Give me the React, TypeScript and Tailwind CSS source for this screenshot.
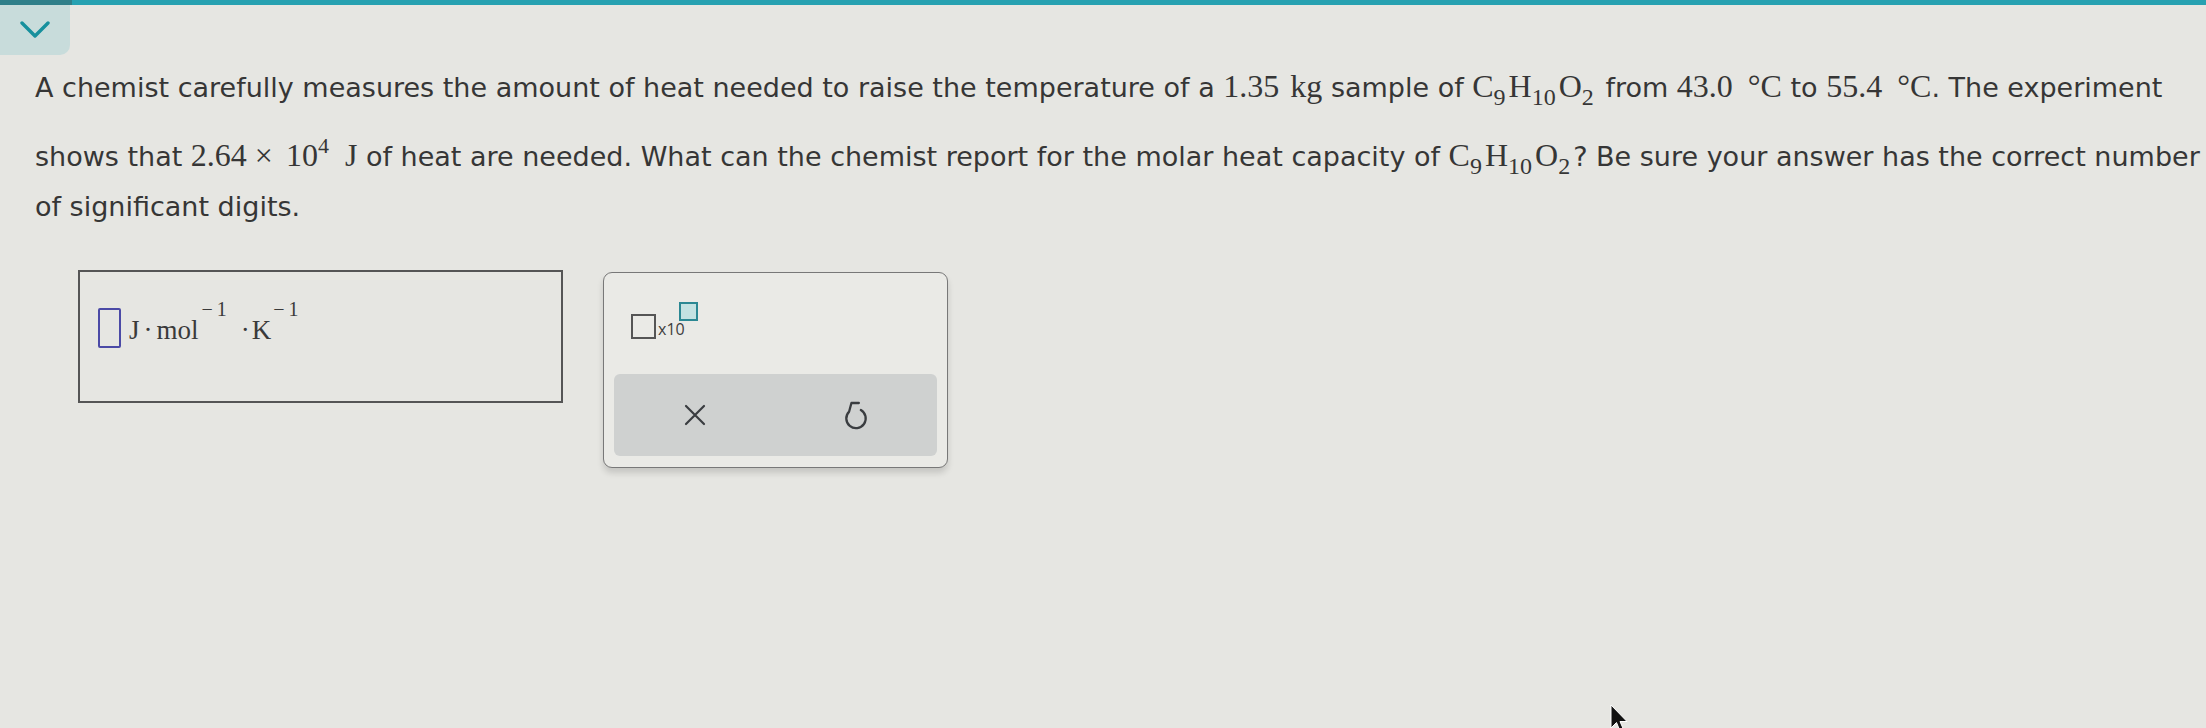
import React from "react";

const serif = "font-['Liberation_Serif','Times_New_Roman',serif]";

// math-style run (numbers, units, formulas)
const M = ({ children }: { children: React.ReactNode }) => (
  <span className={`${serif} text-[32px]`}>{children}</span>
);

const Sub = ({ children }: { children: React.ReactNode }) => (
  <span className="text-[24px] leading-none align-[-8px] mr-[3px]">{children}</span>
);

const Formula = () => (
  <M>
    C<Sub>9</Sub>H<Sub>10</Sub>O<Sub>2</Sub>
  </M>
);

const Temp = ({ value }: { value: string }) => (
  <M>
    {value}
    <span className="ml-[15px]">°C</span>
  </M>
);

const UndoIcon = () => (
  <svg width="28" height="32" viewBox="0 0 24 28" fill="none" stroke="#3a3d40" strokeWidth="2" strokeLinecap="round" strokeLinejoin="round">
    <path d="M14.5 3.5 H8 L6 11 A8.5 8.5 0 1 0 16.25 9.64" />
  </svg>
);

const CloseIcon = () => (
  <svg width="24" height="24" viewBox="0 0 24 24" fill="none" stroke="#3a3d40" strokeWidth="2.2" strokeLinecap="round">
    <path d="M3 3 L21 21 M21 3 L3 21" />
  </svg>
);

export default function App() {
  return (
    <div className="relative w-[2206px] h-[728px] overflow-hidden bg-[#e6e6e2] text-[#363636] font-['DejaVu_Sans','Verdana',sans-serif]">
      {/* top strip */}
      <div className="flex h-[5px]">
        <div className="w-[72px] bg-[#2f7f89]" />
        <div className="flex-1 bg-[#27a1b1]" />
      </div>

      {/* collapse tab */}
      <div className="w-[70px] h-[50px] bg-[#c8dcdb] rounded-br-[10px] flex items-center justify-center">
        <svg width="30" height="18" viewBox="0 0 30 18" fill="none" stroke="#17909d" strokeWidth="3.4" strokeLinecap="round" strokeLinejoin="round">
          <path d="M2 2 L15 15 L28 2" />
        </svg>
      </div>

      {/* question */}
      <div className="mt-[11px] pl-[35px] text-[27px] leading-[40px] whitespace-nowrap">
        <div className="h-[69px]">
          A chemist carefully measures the amount of heat needed to raise the temperature of a{" "}
          <M>
            1.35<span className="ml-[11px]">kg</span>
          </M>{" "}
          sample of <Formula /> from <Temp value="43.0" /> to <Temp value="55.4" />. The experiment
        </div>
        <div className="h-[52px]">
          shows that{" "}
          <M>
            2.64<span className="ml-[8px] mr-[13px]">×</span>10
            <span className="text-[22px] leading-none align-[13px]">4</span>
          </M>
          <M>
            <span className="ml-[16px]">J</span>
          </M>{" "}
          of heat are needed. What can the chemist report for the molar heat capacity of <Formula />? Be
          sure your answer has the correct number
        </div>
        <div className="h-[40px]">of significant digits.</div>
      </div>

      {/* answer area */}
      <div className="mt-[43px] flex items-start">
        <div className="ml-[78px] w-[485px] h-[133px] border-2 border-[#555]">
          <div className={`flex items-start pl-[18px] pt-[36px] ${serif} text-[27px] leading-none text-[#3a3a3a]`}>
            <div className="w-[23px] h-[40px] border-2 border-[#4b4aa6] rounded-[2px]" />
            <span className="ml-[8px] -mt-[9px] whitespace-nowrap">
              J<span className="mx-[4px]">·</span>mol
              <span className="ml-[3px] text-[20px] align-[23px]">
                −<span className="ml-[4px]">1</span>
              </span>
              <span className="ml-[14px] mr-[2px]">·</span>K
              <span className="ml-[2px] text-[20px] align-[23px]">
                −<span className="ml-[4px]">1</span>
              </span>
            </span>
          </div>
        </div>

        <div className="ml-[40px] mt-[2px] w-[345px] h-[196px] border-[1.5px] border-[#787878] rounded-[9px] bg-[#eaeae6] shadow-[0_5px_6px_rgba(0,0,0,0.14)] flex flex-col px-[10px] pb-[9px]">
          <div className="h-[101px] flex items-start pl-[17px] pt-[29px]">
            <div className="mt-[12px] w-[25px] h-[25px] border-2 border-[#555]" />
            <span className="ml-[2px] mt-[19px] text-[16px] leading-none font-['Open_Sans',sans-serif] text-[#3d3d3d]">x10</span>
            <div className="-ml-[6px] w-[19px] h-[19px] border-2 border-[#2b8893] bg-[#c3e2e2]" />
          </div>
          <div className="h-[82px] rounded-[6px] bg-[#cfd1d0] grid grid-cols-2">
            <div className="flex items-center justify-center">
              <CloseIcon />
            </div>
            <div className="flex items-center justify-center">
              <UndoIcon />
            </div>
          </div>
        </div>
      </div>

      {/* mouse pointer */}
      <svg className="absolute left-[1610px] top-[704px]" width="20" height="30" viewBox="0 0 20 30">
        <path d="M1 1 L1 24 L6.5 18.5 L10 27 L13.5 25.5 L10 17.5 L17 17.5 Z" fill="#111" stroke="#fff" strokeWidth="1" />
      </svg>
    </div>
  );
}
